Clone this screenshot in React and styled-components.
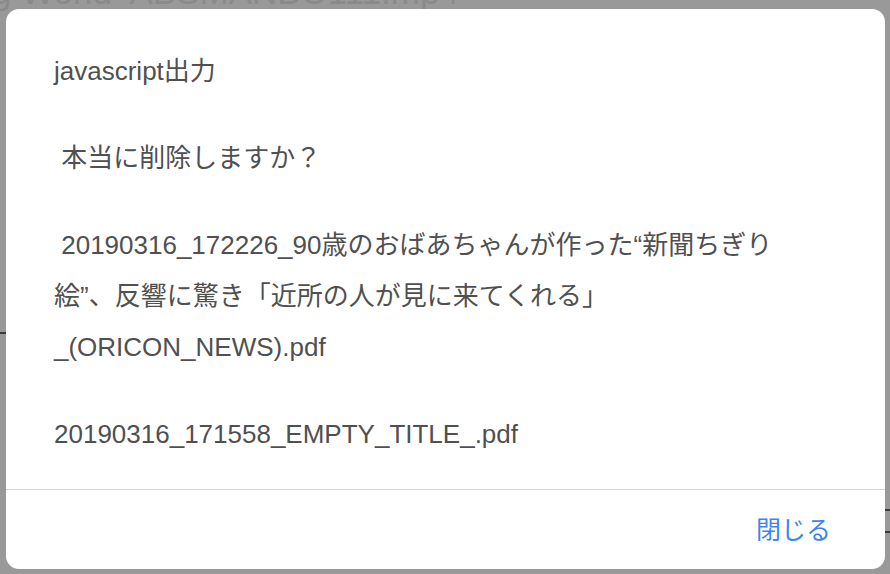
import React from 'react';
import styled, { createGlobalStyle } from 'styled-components';

const GlobalStyle = createGlobalStyle`
	html, body {
		margin: 0;
		padding: 0;
	}

	body {
		background: #999999;
		font-family: "Liberation Sans", "Noto Sans CJK JP", sans-serif;
	}
`;

const messages = [
	' 本当に削除しますか？',
	[
		' 20190316_172226_90歳のおばあちゃんが作った“新聞ちぎり',
		'絵”、反響に驚き「近所の人が見に来てくれる」',
		'_(ORICON_NEWS).pdf',
	],
	'20190316_171558_EMPTY_TITLE_.pdf',
];

function App() {
	return (
		<>
			<GlobalStyle />
			<Page>
				<BackTitle>g World  ABSMANBO111.mp4</BackTitle>
				<BackRule $top={323} $side='left' />
				<BackRule $top={175} $side='right' />
				<BackRule $top={20} $side='right' />

				<Modal>
					<Dialog role='dialog'>
						<Body>
							<Message>javascript出力</Message>
							{ messages.map((msg, i) => (
								<Message key={ i }>
									{ Array.isArray(msg)
										? msg.map((line, j) => (
											<React.Fragment key={ j }>
												{ j > 0 && <br /> }
												{ line }
											</React.Fragment>
										))
										: msg }
								</Message>
							)) }
						</Body>
						<Footer>
							<CloseButton type='button'>閉じる</CloseButton>
						</Footer>
					</Dialog>
				</Modal>
			</Page>
		</>
	);
}

export default App;

const Page = styled.div`
	position: relative;
	width: 890px;
	height: 574px;
	overflow: hidden;
	background: #999999;
	display: flex;
	flex-direction: column;
`;

const BackTitle = styled.div`
	margin-top: -25px;
	margin-left: -8px;
	font-size: 35px;
	line-height: 34px;
	color: #8a8a8a;
	white-space: pre;
`;

const BackRule = styled.div`
	height: 2px;
	width: 50%;
	margin-top: ${ p => p.$top }px;
	margin-left: ${ p => (p.$side === 'right' ? 'auto' : '0') };
	background: #3c3c3c;
	flex-shrink: 0;
`;

const Modal = styled.div`
	position: absolute;
	inset: 0;
	display: flex;
	padding: 9px 5px 5px 6px;
	box-sizing: border-box;
`;

const Dialog = styled.div`
	flex: 1;
	display: flex;
	flex-direction: column;
	background: #ffffff;
	border-radius: 13px;
	overflow: hidden;
`;

const Body = styled.div`
	flex: 1;
	display: flex;
	flex-direction: column;
	gap: 36px;
	padding: 37px 48px 0 48px;
	color: #505050;
	font-size: 26px;
	line-height: 51px;
`;

const Message = styled.p`
	margin: 0;
	white-space: pre;
`;

const Footer = styled.div`
	height: 79px;
	flex-shrink: 0;
	display: flex;
	align-items: center;
	justify-content: flex-end;
	padding-right: 54px;
	border-top: 1px solid #d3d3d3;
`;

const CloseButton = styled.button`
	border: 0;
	padding: 0;
	background: none;
	font-family: inherit;
	font-size: 25px;
	line-height: 30px;
	color: #3d84ef;
	cursor: pointer;
`;
